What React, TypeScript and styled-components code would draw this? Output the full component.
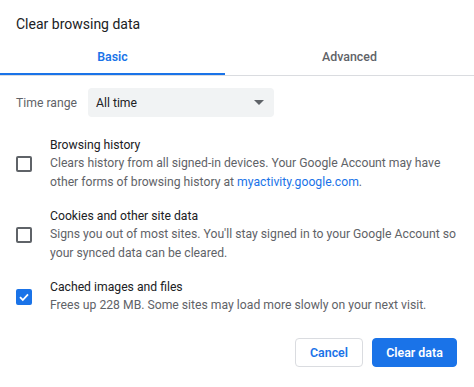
import React from "react";
import styled, { createGlobalStyle } from "styled-components";

const Global = createGlobalStyle`
  html, body { margin: 0; padding: 0; background: #fff; }
  body { font-family: Roboto, "Liberation Sans", Arial, sans-serif; -webkit-font-smoothing: antialiased; }
  * { box-sizing: border-box; }
`;

const Dialog = styled.div`
  width: 474px;
  height: 387px;
  background: #fff;
  display: flex;
  flex-direction: column;
  overflow: hidden;
`;

const Title = styled.h1`
  margin: 0;
  padding: 14px 16px 0;
  font-size: 14px;
  line-height: 20px;
  font-weight: 400;
  color: #202124;
`;

const Tabs = styled.div`
  margin-top: 3px;
  display: flex;
  border-bottom: 1px solid #dadce0;
  height: 39px;
`;

const Tab = styled.div<{ $active?: boolean; $width?: number }>`
  position: relative;
  ${(p) => (p.$width ? `width: ${p.$width}px;` : "flex: 1;")}
  display: flex;
  align-items: center;
  justify-content: center;
  font-size: 12.4px;
  font-weight: ${(p) => (p.$active ? 600 : 500)};
  color: ${(p) => (p.$active ? "#1a73e8" : "#5f6368")};
  &::after {
    content: "";
    position: absolute;
    left: 0;
    right: 0;
    bottom: 0;
    height: 2px;
    background: ${(p) => (p.$active ? "#1a73e8" : "transparent")};
  }
`;

const Body = styled.div`
  padding: 12px 16px 0;
  display: flex;
  flex-direction: column;
`;

const TimeRow = styled.div`
  display: flex;
  align-items: center;
  gap: 12px;
`;

const Label = styled.span`
  width: 60px;
  font-size: 12.2px;
  color: #5f6368;
  white-space: nowrap;
`;

const Select = styled.div`
  width: 186px;
  height: 29px;
  background: #f1f3f4;
  border-radius: 4px;
  display: flex;
  align-items: center;
  justify-content: space-between;
  padding: 0 8px;
  font-size: 12.2px;
  color: #202124;
`;

const Arrow = styled.span`
  width: 0;
  height: 0;
  border-left: 5px solid transparent;
  border-right: 5px solid transparent;
  border-top: 5px solid #5f6368;
  margin-right: 2px;
`;

const Options = styled.div`
  margin-top: 19px;
  display: flex;
  flex-direction: column;
  gap: 15px;
`;

const Option = styled.div`
  display: flex;
  align-items: center;
  gap: 18px;
`;

const Box = styled.div<{ $checked?: boolean }>`
  flex: none;
  width: 16px;
  height: 16px;
  border-radius: 2px;
  border: 2px solid ${(p) => (p.$checked ? "#1a73e8" : "#5f6368")};
  background: ${(p) => (p.$checked ? "#1a73e8" : "transparent")};
  display: flex;
  align-items: center;
  justify-content: center;
`;

const OptionText = styled.div`
  display: flex;
  flex-direction: column;
`;

const OptionTitle = styled.div`
  font-size: 12.2px;
  line-height: 18px;
  color: #202124;
`;

const OptionDesc = styled.div`
  font-size: 12.2px;
  line-height: 19px;
  color: #5f6368;
  white-space: nowrap;
`;

const Link = styled.a`
  color: #1a73e8;
  text-decoration: none;
`;

const Footer = styled.div`
  margin-top: 23px;
  display: flex;
  justify-content: flex-end;
  gap: 9px;
  padding-right: 1px;
`;

const Button = styled.button<{ $primary?: boolean; $width: number }>`
  width: ${(p) => p.$width}px;
  height: 29px;
  border-radius: 4px;
  font-family: inherit;
  font-size: 12.4px;
  font-weight: 600;
  border: 1px solid ${(p) => (p.$primary ? "#1a73e8" : "#dadce0")};
  background: ${(p) => (p.$primary ? "#1a73e8" : "#fff")};
  color: ${(p) => (p.$primary ? "#fff" : "#1a73e8")};
  padding: 0;
  cursor: pointer;
`;

const Check = () => (
  <svg width="12" height="12" viewBox="0 0 12 12">
    <path d="M2 6.2 L4.8 9 L10 3.4" fill="none" stroke="#fff" strokeWidth="1.8" />
  </svg>
);

export default function App() {
  return (
    <>
      <Global />
      <Dialog>
        <Title>Clear browsing data</Title>
        <Tabs>
          <Tab $active $width={225}>Basic</Tab>
          <Tab>Advanced</Tab>
        </Tabs>
        <Body>
          <TimeRow>
            <Label>Time range</Label>
            <Select>
              <span>All time</span>
              <Arrow />
            </Select>
          </TimeRow>
          <Options>
            <Option>
              <Box />
              <OptionText>
                <OptionTitle>Browsing history</OptionTitle>
                <OptionDesc>
                  Clears history from all signed-in devices. Your Google Account may have
                  <br />
                  other forms of browsing history at <Link>myactivity.google.com</Link>.
                </OptionDesc>
              </OptionText>
            </Option>
            <Option>
              <Box />
              <OptionText>
                <OptionTitle>Cookies and other site data</OptionTitle>
                <OptionDesc>
                  Signs you out of most sites. You'll stay signed in to your Google Account so
                  <br />
                  your synced data can be cleared.
                </OptionDesc>
              </OptionText>
            </Option>
            <Option>
              <Box $checked>
                <Check />
              </Box>
              <OptionText>
                <OptionTitle>Cached images and files</OptionTitle>
                <OptionDesc>Frees up 228 MB. Some sites may load more slowly on your next visit.</OptionDesc>
              </OptionText>
            </Option>
          </Options>
          <Footer>
            <Button $width={68}>Cancel</Button>
            <Button $primary $width={85}>Clear data</Button>
          </Footer>
        </Body>
      </Dialog>
    </>
  );
}
